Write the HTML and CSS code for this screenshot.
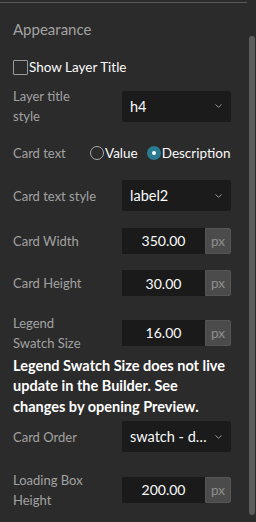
FILE: index.html
```html
<!DOCTYPE html>
<html>
<head>
<meta charset="utf-8">
<link rel="stylesheet" href="styles.css">
</head>
<body>
<div class="frame">
  <div class="panel">
    <div class="topline"></div>
    <div class="heading">Appearance</div>
    <label class="check"><span class="box"></span><span class="check-text">Show Layer Title</span></label>
    <div class="rows">
      <div class="row">
        <span class="lbl">Layer title style</span>
        <div class="select"><span class="sel-text">h4</span><svg class="chev" width="7" height="4" viewBox="0 0 7 4"><polyline points="0.5,0.5 3.5,3.3 6.5,0.5" fill="none" stroke="#9a9a9a" stroke-width="1"/></svg></div>
      </div>
      <div class="row radio-row">
        <span class="lbl lbl-short">Card text</span>
        <div class="radios">
          <span class="radio"><span class="circle"></span>Value</span>
          <span class="radio"><span class="circle on"></span>Description</span>
        </div>
      </div>
      <div class="row">
        <span class="lbl">Card text style</span>
        <div class="select"><span class="sel-text">label2</span><svg class="chev" width="7" height="4" viewBox="0 0 7 4"><polyline points="0.5,0.5 3.5,3.3 6.5,0.5" fill="none" stroke="#9a9a9a" stroke-width="1"/></svg></div>
      </div>
      <div class="row">
        <span class="lbl">Card Width</span>
        <div class="num"><span class="num-val">350.00</span><span class="unit">px</span></div>
      </div>
      <div class="row">
        <span class="lbl">Card Height</span>
        <div class="num"><span class="num-val">30.00</span><span class="unit">px</span></div>
      </div>
      <div class="group">
        <div class="row">
          <span class="lbl">Legend Swatch Size</span>
          <div class="num"><span class="num-val">16.00</span><span class="unit">px</span></div>
        </div>
        <p class="note">Legend Swatch Size does not live update in the Builder. See changes by opening Preview.</p>
      </div>
      <div class="row">
        <span class="lbl">Card Order</span>
        <div class="select"><span class="sel-text">swatch - description</span><svg class="chev" width="7" height="4" viewBox="0 0 7 4"><polyline points="0.5,0.5 3.5,3.3 6.5,0.5" fill="none" stroke="#9a9a9a" stroke-width="1"/></svg></div>
      </div>
      <div class="row row-last">
        <span class="lbl">Loading Box Height</span>
        <div class="num"><span class="num-val">200.00</span><span class="unit">px</span></div>
      </div>
    </div>
  </div>
  <div class="track"><div class="thumb"></div></div>
</div>
</body>
</html>
```

FILE: styles.css
```css
html, body {
  margin: 0;
  padding: 0;
  background: #2b2b2b;
}
body {
  font-family: Lato, "Noto Sans", sans-serif;
  color: #f2f2f2;
  width: 256px;
  height: 522px;
  overflow: hidden;
}
.frame {
  display: flex;
  height: 522px;
}
.panel {
  width: 248px;
  flex: none;
}
.topline {
  margin-top: 2px;
  height: 1px;
  width: 247px;
  background: #585858;
}
.heading {
  margin: 15.6px 0 0 13px;
  font-size: 15px;
  line-height: 20px;
  color: #a2a2a2;
}
.check {
  margin: 21px 0 0 13px;
  display: flex;
  align-items: center;
  height: 15px;
  font-size: 13.5px;
  color: #fafafa;
}
.box {
  width: 15px;
  height: 15px;
  box-sizing: border-box;
  border: 1.5px solid #9a9a9a;
  border-radius: 1px;
  margin-right: 1px;
}
.rows {
  margin: 11.5px 0 0 13px;
  width: 218px;
  display: flex;
  flex-direction: column;
  gap: 16.5px;
}
.group {
  display: flex;
  flex-direction: column;
}
.row {
  display: flex;
  align-items: center;
  justify-content: space-between;
}
.row-last {
  margin-top: 1px;
}
.lbl {
  width: 84px;
  font-size: 13px;
  line-height: 20px;
  color: #a2a2a2;
}
.radio-row {
  height: 21px;
  justify-content: flex-start;
}
.lbl-short {
  width: 77px;
}
.radios {
  display: flex;
  gap: 9px;
  font-size: 13.5px;
  color: #fafafa;
}
.radio {
  display: flex;
  align-items: center;
}
.circle {
  width: 14px;
  height: 14px;
  box-sizing: border-box;
  border: 1.5px solid #a8a8a8;
  border-radius: 50%;
  margin-right: 1px;
}
.circle.on {
  border: 5px solid #2b7c91;
  background: #ffffff;
}
.select {
  width: 109px;
  height: 31px;
  box-sizing: border-box;
  background: #1b1b1b;
  border-radius: 2px;
  display: flex;
  align-items: center;
  padding: 0 9px 0 8px;
}
.sel-text {
  flex: 1;
  min-width: 0;
  font-size: 14.5px;
  color: #fafafa;
  white-space: nowrap;
  overflow: hidden;
  text-overflow: ellipsis;
  margin-right: 8px;
}
.chev {
  flex: none;
  display: block;
}
.num {
  width: 109px;
  height: 26px;
  display: flex;
}
.num-val {
  width: 83px;
  background: #1a1a1a;
  font-size: 14px;
  color: #fafafa;
  display: flex;
  align-items: center;
  justify-content: center;
}
.unit {
  width: 26px;
  box-sizing: border-box;
  background: #4b4b4b;
  border: 1px solid #555;
  border-radius: 0 2px 2px 0;
  font-size: 13.5px;
  color: #8f8f8f;
  display: flex;
  align-items: center;
  justify-content: center;
}
.note {
  margin: 3px 0 -12.5px 0;
  font-size: 14.5px;
  line-height: 20.5px;
  font-weight: 700;
  color: #ffffff;
}
.track {
  width: 8px;
  flex: none;
  padding-top: 36px;
  box-sizing: border-box;
}
.thumb {
  margin-left: 1px;
  width: 6px;
  height: 479px;
  border-radius: 3px;
  background: #5c5c5c;
}
```
